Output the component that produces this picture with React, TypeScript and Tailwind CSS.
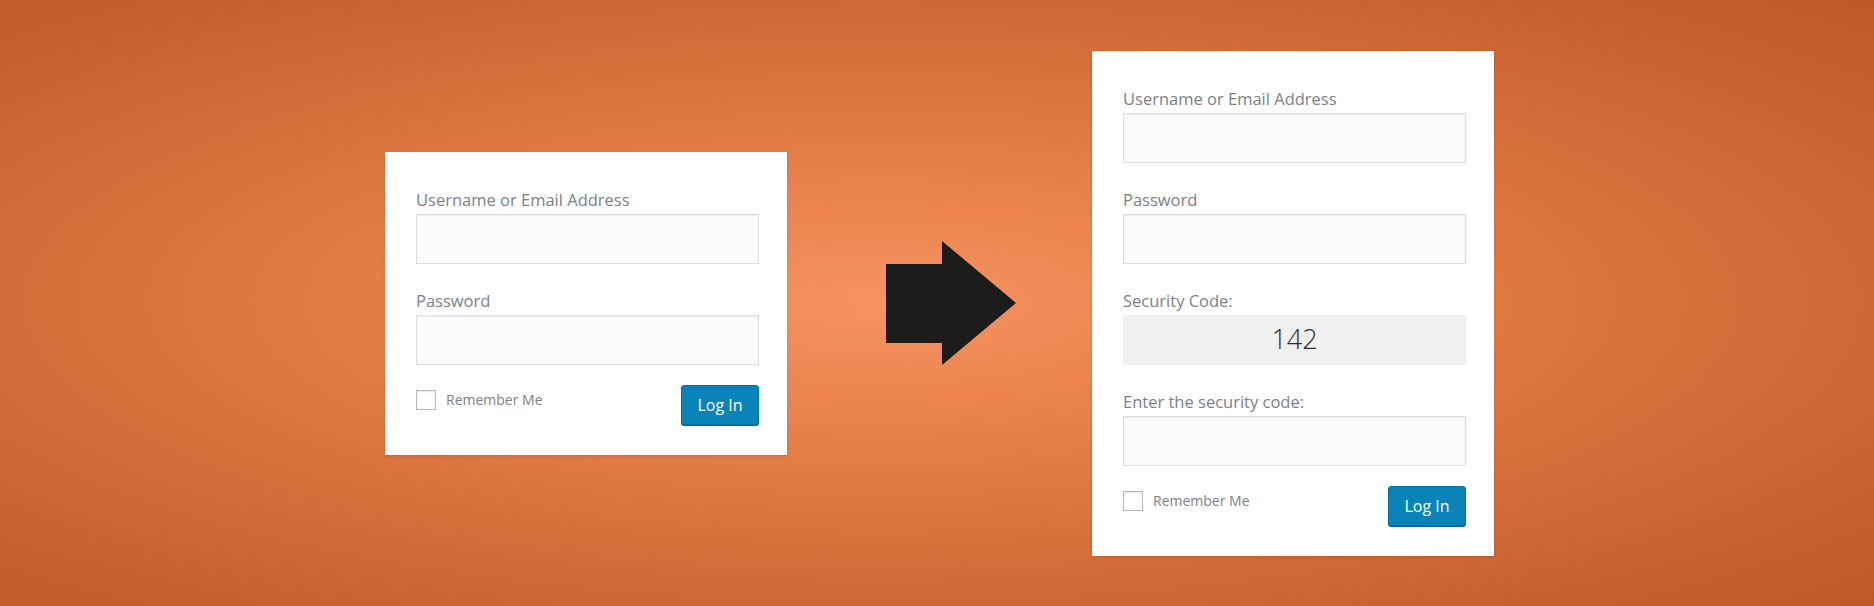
import React from "react";

const font = { fontFamily: '"Open Sans", "Noto Sans", sans-serif' };

// WordPress-style text field
const Field = ({ label, last }: { label: string; last?: boolean }) => (
  <div className={last ? "" : "mb-[25px]"}>
    <label className="block text-[16.5px] leading-6 text-[#7b8187]">{label}</label>
    <div className="mt-[2px] h-[50px] w-full border border-[#dddddd] bg-[#fbfbfb] shadow-[inset_0_1px_2px_rgba(0,0,0,0.07)]" />
  </div>
);

const SubmitRow = () => (
  <div className="mt-5 flex items-start justify-between">
    <div className="mt-[5px] flex items-center gap-[10px]">
      <span className="block h-5 w-5 border border-[#b4b9be] bg-white shadow-[inset_0_1px_2px_rgba(0,0,0,0.1)]" />
      <span className="text-[14px] leading-5 text-[#7b8187]">Remember Me</span>
    </div>
    <button className="h-10 w-[78px] rounded-[3px] border border-[#0073aa] bg-[#0a84b8] text-[16px] text-white shadow-[0_1px_0_#006799]">
      Log In
    </button>
  </div>
);

const LoginCard = ({ withCaptcha }: { withCaptcha?: boolean }) => (
  <div className="w-[402px] shrink-0 bg-white pt-9 pb-[30px] pl-[31px] pr-[28px] shadow-[0_1px_3px_rgba(0,0,0,0.13)]">
    <Field label="Username or Email Address" />
    <Field label="Password" last={!withCaptcha} />
    {withCaptcha && (
      <>
        <div className="mb-[25px]">
          <label className="block text-[16.5px] leading-6 text-[#7b8187]">Security Code:</label>
          <div className="mt-[2px] flex h-[50px] items-center justify-center bg-[#f0f0f0] text-[27px] font-light text-[#2e2e2e]">
            142
          </div>
        </div>
        <Field label="Enter the security code:" last />
      </>
    )}
    <SubmitRow />
  </div>
);

const Arrow = () => (
  <svg width="130" height="125" viewBox="0 0 130 125" className="shrink-0">
    <path d="M0 23 H56 V0 L130 62 L56 124 V102 H0 Z" fill="#1c1c1c" />
  </svg>
);

export default function App() {
  return (
    <div
      style={font}
      className="flex h-[606px] w-[1874px] items-center overflow-hidden bg-[radial-gradient(ellipse_at_47%_50%,#f6935f_0%,#e57d47_35%,#cf6834_70%,#c05727_100%)] pl-[385px]"
    >
      <LoginCard />
      <div className="ml-[99px] mr-[76px] flex items-center">
        <Arrow />
      </div>
      <LoginCard withCaptcha />
    </div>
  );
}
